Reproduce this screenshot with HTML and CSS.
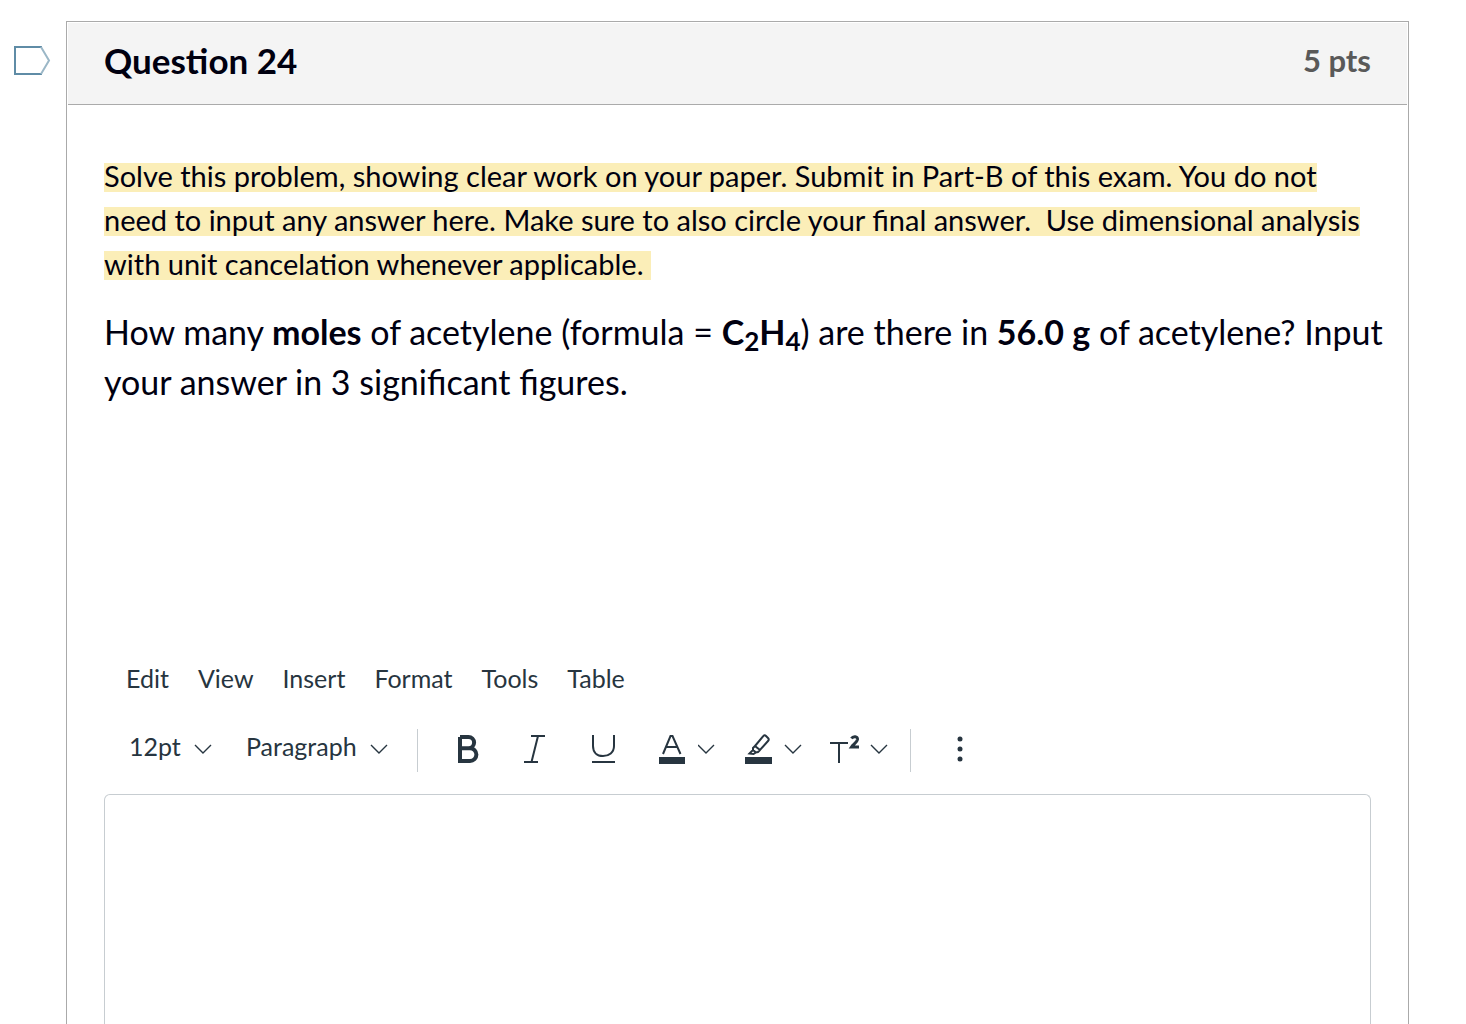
FILE: index.html
```html
<!DOCTYPE html>
<html lang="en">
<head>
<meta charset="utf-8">
<meta name="viewport" content="width=device-width, initial-scale=1">
<title>Question 24</title>
<link rel="stylesheet" href="styles.css">
</head>
<body>
<main class="page">
  <button class="flag" type="button" aria-label="Flag question">
    <svg width="37" height="30" viewBox="0 0 37 30" fill="none" stroke-width="2"><path d="M28 28H1V1H28" stroke="#5f8ca6"/><path d="M27 1L35 14.500L27 28" stroke="#9bb7c7"/></svg>
  </button>
  <article class="question">
    <header class="question-header">
      <h1 class="question-title">Question 24</h1>
      <span class="points">5 pts</span>
    </header>
    <div class="question-body">
      <p class="instructions"><span class="highlight">Solve this problem, showing clear work on your paper. Submit in Part-B of this exam. You do not need to input any answer here. Make sure to also circle your final answer.&nbsp; Use dimensional analysis with unit cancelation whenever applicable.&nbsp;</span></p>
      <p class="prompt">How many <strong>moles</strong> of acetylene (formula = <strong>C<sub>2</sub>H<sub>4</sub></strong>) are there in <strong>56.0 g</strong> of acetylene? Input your answer in 3 significant figures.</p>
      <section class="editor" aria-label="Answer editor">
        <nav class="menubar">
          <button type="button">Edit</button>
          <button type="button">View</button>
          <button type="button">Insert</button>
          <button type="button">Format</button>
          <button type="button">Tools</button>
          <button type="button">Table</button>
        </nav>
        <div class="toolbar">
          <div class="group group-text">
            <label class="picker picker-size">
              <select aria-label="Font size"><option>12pt</option></select>
              <svg class="chevron" viewBox="0 0 18 12"><path d="M1 2L9 10L17 2"/></svg>
            </label>
            <label class="picker picker-block">
              <select aria-label="Block style"><option>Paragraph</option></select>
              <svg class="chevron" viewBox="0 0 18 12"><path d="M1 2L9 10L17 2"/></svg>
            </label>
          </div>
          <div class="group group-style">
            <button class="tool" type="button" aria-label="Bold">
              <svg width="30" height="30" viewBox="0 0 30 30"><path class="heavy" d="M9 3H17.500A5.300 5.300 0 0 1 17.500 14.200H9M17.500 14.200H19A6.300 6.300 0 0 1 19 27H9V3"/></svg>
            </button>
            <button class="tool" type="button" aria-label="Italic">
              <svg width="30" height="30" viewBox="0 0 30 30"><path d="M11 2H25M4 28H18M18 2L11.500 28"/></svg>
            </button>
            <button class="tool" type="button" aria-label="Underline">
              <svg width="30" height="30" viewBox="0 0 30 30"><path d="M4 1V12C4 18.500 8 22 14 22S25 18.500 25 12V1M3 28H26"/></svg>
            </button>
            <button class="tool split" type="button" aria-label="Text color">
              <svg width="30" height="30" viewBox="0 0 30 30"><path d="M5 20L12.500 2H14.500L22.500 20M8 13H20"/><path class="solid" d="M1 23H27V30H1Z"/></svg>
              <svg class="chevron" viewBox="0 0 18 12"><path d="M0 2L8 10L16 2"/></svg>
            </button>
            <button class="tool split" type="button" aria-label="Highlight color">
              <svg width="30" height="30" viewBox="0 0 30 30"><path class="thin" d="M11 12L19 2.500C20 1 21 1 22 2L24 4C25 5 25 6 24 7L16 16ZM11 12L9 14V16L12 18.500L14 18L16 16M9 16L5.500 19.500L9.500 20L12 18.500"/><path class="solid" d="M1 23H28V30H1Z"/></svg>
              <svg class="chevron" viewBox="0 0 18 12"><path d="M1 2L9 10L17 2"/></svg>
            </button>
            <button class="tool split" type="button" aria-label="Superscript">
              <svg width="30" height="30" viewBox="0 0 30 30"><path d="M0 9H18M9 9V29"/><path class="two" d="M21.500 4.500C23 1.800 28 2 27.500 5.500C27 8.500 23.500 10 21.500 13H29"/></svg>
              <svg class="chevron" viewBox="0 0 18 12"><path d="M1 2L9 10L17 2"/></svg>
            </button>
          </div>
          <button class="tool more" type="button" aria-label="More">
            <svg width="6" height="28" viewBox="0 0 6 28"><g class="solid"><circle cx="3" cy="4" r="2.500"/><circle cx="3" cy="14" r="2.500"/><circle cx="3" cy="24" r="2.500"/></g></svg>
          </button>
        </div>
        <textarea class="answer" aria-label="Answer"></textarea>
      </section>
    </div>
  </article>
</main>
</body>
</html>
```
FILE: styles.css
```css
* { box-sizing: border-box; }

body {
  margin: 0;
  background: #fff;
  color: #000010;
  font-family: Lato, "Liberation Sans", sans-serif;
}

button, select {
  margin: 0;
  padding: 0;
  border: 0;
  background: none;
  color: #273540;
  font: inherit;
  cursor: pointer;
}

svg { display: block; flex: none; }

.page {
  display: flex;
  align-items: flex-start;
  gap: 15px;
  min-height: 100vh;
  padding: 21px 57px 0 14px;
}

.flag { margin-top: 25px; }

.question {
  flex: 1;
  align-self: stretch;
  display: flex;
  flex-direction: column;
  padding: 1px 1px 0;
  border: 1px solid #aaa;
  border-bottom: 0;
}

.question-header {
  display: flex;
  align-items: center;
  justify-content: space-between;
  height: 82px;
  padding: 0 36px 8px;
  background: #f4f4f4;
  border-bottom: 1px solid #aaa;
}

.question-title { margin: 0; font-size: 35px; line-height: 44px; font-weight: 700; }

.points { color: #595959; font-size: 31px; line-height: 44px; font-weight: 700; }

.question-body {
  flex: 1;
  display: flex;
  flex-direction: column;
  padding: 49px 36px 0;
}

.instructions { margin: 0; font-size: 29px; line-height: 44px; }

.highlight {
  background: linear-gradient(transparent 5px, #fbeeb8 5px, #fbeeb8 34px, transparent 34px);
  -webkit-box-decoration-break: clone;
  box-decoration-break: clone;
}

.prompt { margin: 21px -16px 0 0; font-size: 34px; line-height: 50px; }

.prompt sub { font-size: 26px; line-height: 0; vertical-align: -6px; }

.editor {
  flex: 1;
  display: flex;
  flex-direction: column;
  margin-top: 251px;
}

.menubar {
  display: flex;
  gap: 29px;
  padding-left: 22px;
  font-size: 25px;
  line-height: 40px;
}

.toolbar {
  display: flex;
  align-items: center;
  margin: 31px 0 22px;
  padding-left: 25px;
  font-size: 25px;
}

.group {
  display: flex;
  align-items: center;
  height: 43px;
  padding-bottom: 3px;
  border-right: 1px solid #c7cdd1;
}

.group-text { gap: 34px; padding-right: 29px; }

.picker { display: grid; align-items: center; }

.picker > * { grid-area: 1 / 1; }

.picker select { width: 100%; appearance: none; padding-bottom: 6px; line-height: 30px; }

.picker .chevron { justify-self: end; pointer-events: none; }

.picker-size { width: 83px; }

.picker-block { width: 142px; }

.group-style { gap: 39px; padding-right: 22px; padding-left: 33px; }

.tool { display: flex; align-items: center; }

.split { gap: 10px; }

.split + .split { margin-left: -11px; }

.tool path { fill: none; stroke: #273540; stroke-width: 2; }

.tool .heavy { stroke-width: 4; }

.tool .two { stroke-width: 3; }

.tool .solid { fill: #273540; stroke: none; }

.chevron { width: 18px; height: 12px; }

.picker .chevron path, .tool .chevron path { fill: none; stroke: #273540; stroke-width: 1.4; }

.more { margin-left: 46px; padding-bottom: 3px; }

.answer {
  flex: 1;
  min-height: 200px;
  padding: 16px;
  border: 1px solid #c7cdd1;
  border-bottom: 0;
  border-radius: 6px 6px 0 0;
  outline: 0;
  resize: none;
  font: inherit;
  font-size: 25px;
}
```
